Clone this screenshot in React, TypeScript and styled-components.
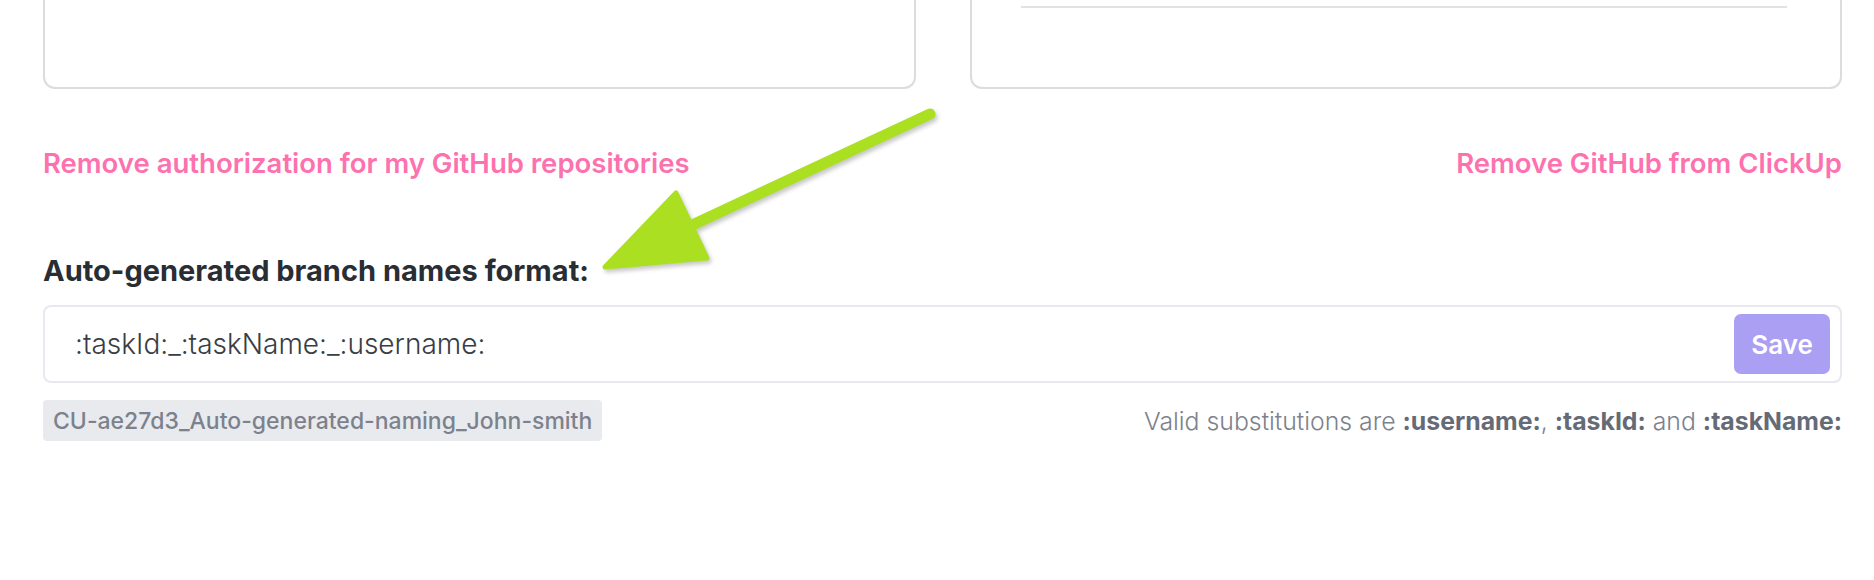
import React from "react";
import styled, { createGlobalStyle } from "styled-components";

const Global = createGlobalStyle`
  html, body { margin: 0; padding: 0; background: #ffffff; }
  body { font-family: Inter, "Noto Sans", sans-serif; -webkit-font-smoothing: antialiased; }
  * { box-sizing: border-box; }
`;

const Page = styled.div`
  position: relative;
  width: 1874px;
  height: 580px;
  overflow: hidden;
  padding: 0 32px 0 43px;
  display: flex;
  flex-direction: column;
`;

const CardsRow = styled.div`
  display: grid;
  grid-template-columns: 1fr 1fr;
  gap: 54px;
`;

const Card = styled.div`
  height: 89px;
  border: 2px solid #dcdcdc;
  border-top: none;
  border-radius: 0 0 12px 12px;
  padding: 6px 53px 0 49px;
`;

const Divider = styled.div`
  height: 2px;
  background: #e2e2e2;
`;

const LinksRow = styled.div`
  display: flex;
  justify-content: space-between;
  align-items: center;
  margin-top: 57px;
  height: 34px;
`;

const DangerLink = styled.a`
  color: #fd71af;
  font-size: 27.5px;
  font-weight: 600;
  cursor: pointer;
`;

const Heading = styled.h3`
  margin: 74px 0 0;
  height: 34px;
  line-height: 34px;
  font-size: 29px;
  font-weight: 700;
  color: #292d34;
`;

const InputBox = styled.div`
  margin-top: 17px;
  height: 78px;
  border: 2px solid #e8e8ee;
  border-radius: 8px;
  display: flex;
  align-items: center;
  padding: 0 10px 0 30px;
`;

const FormatInput = styled.input`
  flex: 1;
  border: none;
  outline: none;
  background: transparent;
  font-family: inherit;
  font-size: 28px;
  font-weight: 300;
  color: #3a3d42;
  padding: 0;
`;

const SaveButton = styled.button`
  width: 96px;
  height: 60px;
  border: none;
  border-radius: 7px;
  background: #aa9ff2;
  color: #ffffff;
  font-family: inherit;
  font-size: 26px;
  font-weight: 600;
  cursor: pointer;
`;

const FooterRow = styled.div`
  margin-top: 17px;
  display: flex;
  justify-content: space-between;
  align-items: center;
`;

const Example = styled.span`
  display: inline-flex;
  align-items: center;
  height: 41px;
  padding: 0 10px;
  border-radius: 4px;
  background: #e9eaee;
  color: #7c828d;
  font-size: 23px;
  font-weight: 500;
`;

const Hint = styled.span`
  color: #7c828d;
  font-size: 24.8px;
  font-weight: 300;
  b { font-weight: 700; color: #656b76; }
`;

const ArrowLayer = styled.svg`
  position: absolute;
  left: 0;
  top: 0;
  pointer-events: none;
  filter: drop-shadow(2px 3px 2px rgba(0, 0, 0, 0.22));
`;

export default function App() {
  return (
    <>
      <Global />
      <Page>
        <CardsRow>
          <Card />
          <Card>
            <Divider />
          </Card>
        </CardsRow>
        <LinksRow>
          <DangerLink>Remove authorization for my GitHub repositories</DangerLink>
          <DangerLink>Remove GitHub from ClickUp</DangerLink>
        </LinksRow>
        <Heading>Auto-generated branch names format:</Heading>
        <InputBox>
          <FormatInput defaultValue=":taskId:_:taskName:_:username:" />
          <SaveButton>Save</SaveButton>
        </InputBox>
        <FooterRow>
          <Example>CU-ae27d3_Auto-generated-naming_John-smith</Example>
          <Hint>
            Valid substitutions are <b>:username:</b>, <b>:taskId:</b> and <b>:taskName:</b>
          </Hint>
        </FooterRow>
        <ArrowLayer width="1874" height="580" viewBox="0 0 1874 580">
          <line x1="930" y1="114" x2="688" y2="227" stroke="#abe022" strokeWidth="11" strokeLinecap="round" />
          <polygon
            points="605,267 676,193 707,258"
            fill="#abe022"
            stroke="#abe022"
            strokeWidth="5"
            strokeLinejoin="round"
          />
        </ArrowLayer>
      </Page>
    </>
  );
}
